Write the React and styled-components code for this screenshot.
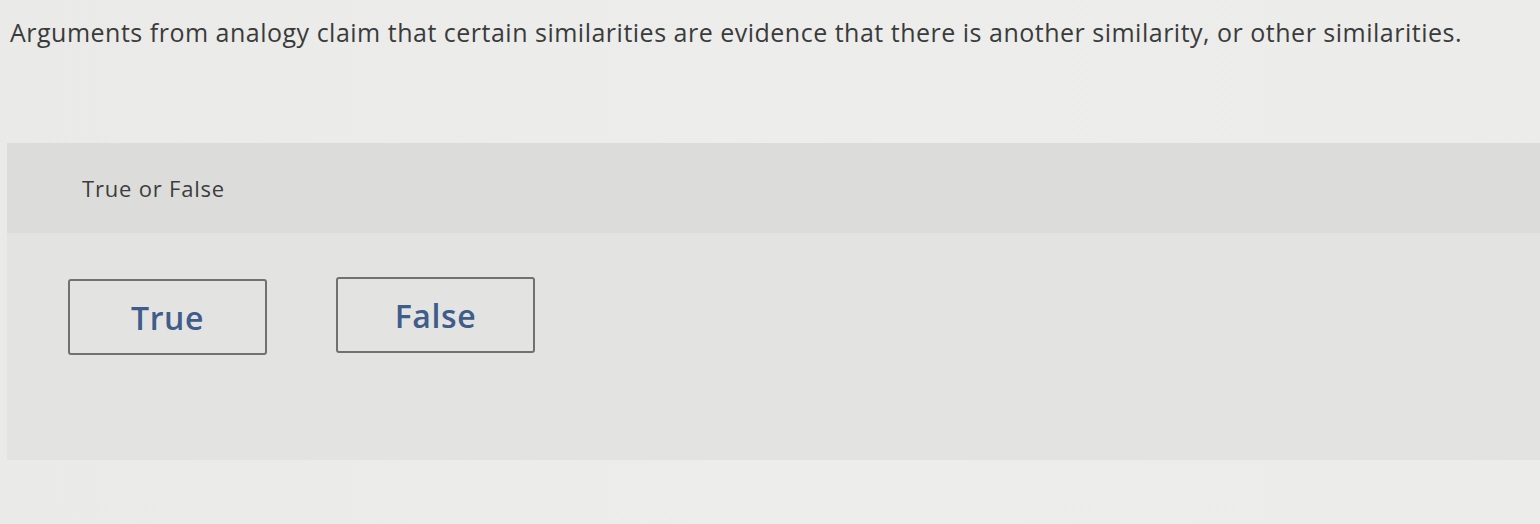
import React from "react";
import styled, { createGlobalStyle } from "styled-components";

const Global = createGlobalStyle`
  html, body { margin: 0; padding: 0; }
  body {
    width: 1540px;
    height: 524px;
    overflow: hidden;
    background: #ebebe9;
    font-family: "Open Sans", "Noto Sans", sans-serif;
  }
`;

const Page = styled.div`
  width: 1540px;
  height: 524px;
  display: flex;
  flex-direction: column;
  background: linear-gradient(90deg, #eaeae8 0%, #ededeb 50%, #ececea 100%);
`;

const Prompt = styled.p`
  margin: 0;
  padding: 15px 0 0 10px;
  height: 143px;
  box-sizing: border-box;
  font-size: 25px;
  letter-spacing: 0.5px;
  color: #3a3b3b;
  white-space: nowrap;
`;

const Panel = styled.section`
  margin-left: 7px;
  display: flex;
  flex-direction: column;
`;

const PanelHeader = styled.div`
  height: 90px;
  box-sizing: border-box;
  padding: 30px 0 0 75px;
  background: #dcdddb;
  font-size: 22px;
  letter-spacing: 0.8px;
  color: #3c3d3d;
`;

const PanelBody = styled.div`
  height: 227px;
  box-sizing: border-box;
  padding: 45px 0 0 61px;
  background: #e3e4e2;
  display: flex;
  align-items: flex-start;
  gap: 69px;
`;

const Choice = styled.button`
  width: 199px;
  height: 76px;
  margin-top: ${(p) => p.$offset || 0}px;
  box-sizing: border-box;
  background: transparent;
  border: 2px solid #707171;
  border-radius: 3px;
  font-family: "Open Sans", "Noto Sans", sans-serif;
  font-weight: 600;
  font-size: 32px;
  letter-spacing: 0.6px;
  color: #3f5c8a;
  display: flex;
  align-items: center;
  justify-content: center;
  cursor: pointer;
`;

export default function App() {
  return (
    <>
      <Global />
      <Page>
        <Prompt>
          Arguments from analogy claim that certain similarities are evidence that there is
          another similarity, or other similarities.
        </Prompt>
        <Panel>
          <PanelHeader>True or False</PanelHeader>
          <PanelBody>
            <Choice $offset={1}>True</Choice>
            <Choice $offset={-1}>False</Choice>
          </PanelBody>
        </Panel>
      </Page>
    </>
  );
}
